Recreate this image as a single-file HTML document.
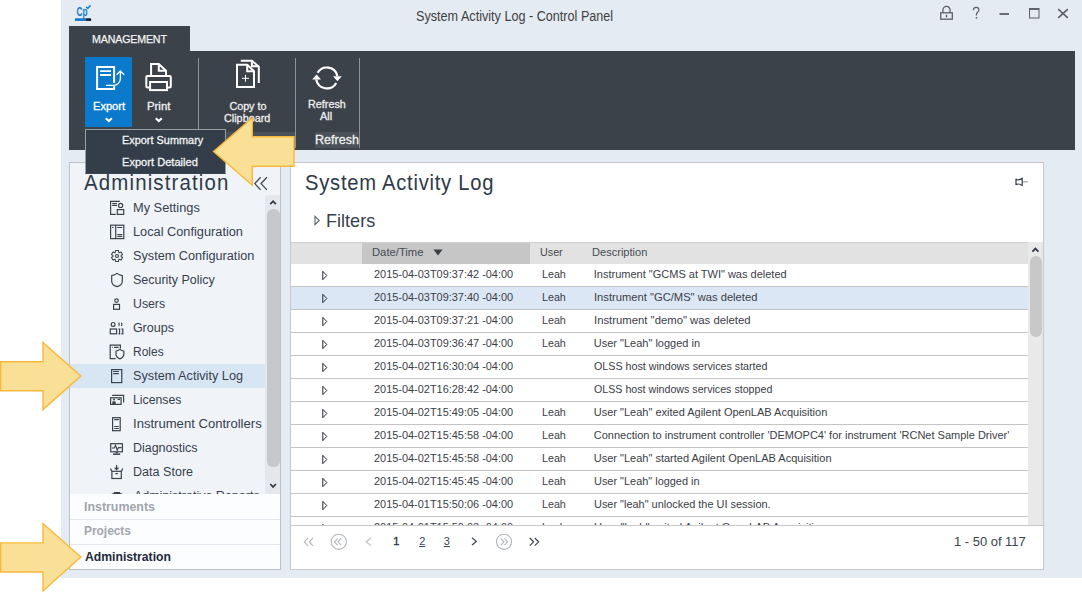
<!DOCTYPE html>
<html><head><meta charset="utf-8">
<style>
*{margin:0;padding:0;box-sizing:border-box}
html,body{width:1082px;height:592px;overflow:hidden;background:#fff;font-family:"Liberation Sans",sans-serif}
.a{position:absolute}
svg{position:absolute;left:0;top:0;overflow:visible}
.t{position:absolute;white-space:nowrap;line-height:1}
.r{font-size:11px;color:#3b4047}
.w{-webkit-text-stroke:0.25px currentColor}
.clip{position:absolute;overflow:hidden}
</style></head><body>
<div class="a" style="left:61px;top:0;width:1021px;height:578px;background:#e5ebf3"></div>

<!-- logo + title bar icons -->
<svg width="1082" height="60" viewBox="0 0 1082 60">
  <text x="76.6" y="16.2" font-family="Liberation Sans" font-weight="700" font-size="12" fill="#0f7bcc" textLength="11" lengthAdjust="spacingAndGlyphs">Cp</text>
  <path d="M86.2,6.8 L87.8,8.5 L90.6,5.2" fill="none" stroke="#0f7bcc" stroke-width="1.4"/>
  <rect x="75" y="18.3" width="10.5" height="2.6" fill="#0a78d0"/>
  <rect x="85.5" y="18.3" width="5.6" height="2.6" fill="#0d1a2a"/>
  <g fill="none" stroke="#5c5f63">
    <path d="M942.9,12.6 V10 A3.6,3.6 0 0 1 950.1,10 V12.6" stroke-width="1.3"/>
    <rect x="940.7" y="12.8" width="11.6" height="6.4" stroke-width="1.3"/>
    <path d="M946.5,14.8 V17.4" stroke-width="1.4"/>
    <path d="M973.4,10.3 C973.4,8.2 974.6,7.4 976.1,7.4 C977.8,7.4 978.9,8.4 978.9,10 C978.9,12.2 976.4,12.4 976.4,14.6 V15.4" stroke-width="1.2"/>
    <path d="M999.5,14 H1009" stroke-width="1.8"/>
    <rect x="1029.5" y="8.5" width="9.5" height="9.5" stroke-width="1"/>
    <path d="M1029.5,9.2 H1039" stroke-width="1.5"/>
    <path d="M1058.2,9.2 L1067.8,17.8 M1067.8,9.2 L1058.2,17.8" stroke-width="1.6"/>
  </g>
  <rect x="975.7" y="17" width="1.5" height="1.6" fill="#5c5f63"/>
</svg>

<!-- ribbon -->
<div class="a" style="left:69px;top:26px;width:121px;height:25px;background:#3c424a"></div>
<div class="a" style="left:69px;top:51px;width:1006px;height:99px;background:#3c424a"></div>
<div class="a" style="left:85px;top:57px;width:47px;height:70px;background:#0b7acc"></div>
<div class="a" style="left:198px;top:58px;width:1px;height:90px;background:#8d939a"></div>
<div class="a" style="left:295px;top:58px;width:1px;height:90px;background:#8d939a"></div>
<div class="a" style="left:359px;top:58px;width:1px;height:90px;background:#8d939a"></div>
<div class="a" style="left:225px;top:132px;width:70px;height:16px;background:#4b5159"></div>
<div class="a" style="left:315px;top:132px;width:43px;height:16px;background:#4b5159"></div>
<svg width="1082" height="160" viewBox="0 0 1082 160">
  <g fill="none" stroke="#fff" stroke-width="2">
    <!-- export -->
    <path d="M97.1,89 V67 H114.1 V83"/>
    <path d="M96.1,89 H115.1 M114.1,86.2 V90"/>
    <path d="M106,85.4 H113.6 A6.8,6.8 0 0 0 120.4,78.6 V71" stroke-width="1.3"/>
    <path d="M116.5,74.9 L120.4,71 L124.3,74.9" stroke-width="1.3"/>
    <path d="M100.1,71.1 H111 M100.1,75 H111" stroke-width="1.9"/>
    <!-- print -->
    <path d="M151.1,75 V64 H158.8 L166,70.8 V75"/>
    <path d="M158.8,64 V70.8 H166"/>
    <rect x="146.3" y="75.9" width="24.5" height="11.5" rx="1.2"/>
    <rect x="150.1" y="82" width="16.9" height="8.1" fill="#3c424a"/>
    <!-- copy -->
    <path d="M240.8,60.7 H251.9 L258.8,66.6 V83"/>
    <path d="M251.9,60.7 V66.2 H258.8"/>
    <path d="M237,87.1 V64.8 H247.2 L254,71.2 V87.1 Z" fill="#3c424a"/>
    <path d="M247.2,64.8 V71.2 H254"/>
    <path d="M242,78.3 H249 M245.5,74.8 V81.8" stroke-width="1"/>
    <!-- refresh -->
    <path d="M317.6,72.8 A10.8,10.8 0 0 1 337.4,76" stroke-width="2.2"/>
    <path d="M336.2,83 A10.8,10.8 0 0 1 316.2,79.4" stroke-width="2.2"/>
  </g>
  <g fill="#fff">
    <path d="M333,76.2 H341.8 L337.4,81.2 Z"/>
    <path d="M312.2,79.4 H321 L316.6,74.4 Z"/>
    <path d="M105.8,118.2 L108.8,121 L111.8,118.2" fill="none" stroke="#fff" stroke-width="2.1"/>
    <path d="M155.8,118.2 L158.8,121 L161.8,118.2" fill="none" stroke="#fff" stroke-width="2.1"/>
  </g>
</svg>

<!-- left panel -->
<div class="a" style="left:69px;top:162px;width:212px;height:408px;background:#f0f4f9;border:1px solid #bcc1c7"></div>
<div class="a" style="left:70px;top:364px;width:195px;height:24px;background:#d8e6f4"></div>
<div class="a" style="left:265px;top:195px;width:15px;height:299px;background:#e4e8ed"></div>
<div class="a" style="left:267px;top:209px;width:12.5px;height:257.5px;background:#c5c9cd;border-radius:6px"></div>
<div class="clip" style="left:70px;top:163px;width:195px;height:331px">
<div class="t" style="left:62.88px;top:39.22px;font-size:12.5px;color:#36404c;transform:scaleX(1.0234);transform-origin:0 0;">My Settings</div>
<div class="t" style="left:62.88px;top:63.22px;font-size:12.5px;color:#36404c;transform:scaleX(1.0208);transform-origin:0 0;">Local Configuration</div>
<div class="t" style="left:62.88px;top:87.22px;font-size:12.5px;color:#36404c;transform:scaleX(1.0153);transform-origin:0 0;">System Configuration</div>
<div class="t" style="left:62.90px;top:111.22px;font-size:12.5px;color:#36404c;">Security Policy</div>
<div class="t" style="left:62.92px;top:135.22px;font-size:12.5px;color:#36404c;transform:scaleX(0.9839);transform-origin:0 0;">Users</div>
<div class="t" style="left:62.90px;top:159.22px;font-size:12.5px;color:#36404c;">Groups</div>
<div class="t" style="left:62.94px;top:183.22px;font-size:12.5px;color:#36404c;transform:scaleX(0.9581);transform-origin:0 0;">Roles</div>
<div class="t" style="left:62.89px;top:207.22px;font-size:12.5px;color:#36404c;transform:scaleX(1.0150);transform-origin:0 0;">System Activity Log</div>
<div class="t" style="left:62.92px;top:231.22px;font-size:12.5px;color:#36404c;transform:scaleX(0.9792);transform-origin:0 0;">Licenses</div>
<div class="t" style="left:62.85px;top:255.22px;font-size:12.5px;color:#36404c;transform:scaleX(1.0467);transform-origin:0 0;">Instrument Controllers</div>
<div class="t" style="left:62.90px;top:279.22px;font-size:12.5px;color:#36404c;">Diagnostics</div>
<div class="t" style="left:62.89px;top:303.22px;font-size:12.5px;color:#36404c;transform:scaleX(1.0052);transform-origin:0 0;">Data Store</div>
<div class="t" style="left:63.90px;top:327.22px;font-size:12.5px;color:#36404c;">Administrative Reports</div>
</div>
<svg width="1082" height="592" viewBox="0 0 1082 592">
  <g fill="none" stroke="#3e4856" stroke-width="1.3">
    <path d="M260.6,177.3 L254.8,183.6 L260.6,189.9 M266.9,177.3 L261.1,183.6 L266.9,189.9"/>
  </g>
  <g fill="none" stroke="#333a44" stroke-width="1.8">
    <path d="M270.3,204.2 L273.1,201.2 L275.9,204.2"/>
    <path d="M270.3,484 L273.1,487 L275.9,484"/>
  </g>
  <!-- nav icons -->
  <g fill="none" stroke="#3a424c" stroke-width="1.2">
    <g transform="translate(109,200)">
      <path d="M10.8,1.3 H1.6 V14.4 H6.7"/>
      <path d="M3.2,3.6 H8 M3.2,5.5 H8"/>
      <circle cx="11.6" cy="5.4" r="2.1"/>
      <rect x="8.3" y="9.6" width="6.4" height="4.8"/>
    </g>
    <g transform="translate(109,224)">
      <rect x="1.6" y="1.2" width="13.2" height="13.4"/>
      <path d="M6.7,1.2 V14.6 M3.1,3.5 H4.6 M8.3,3.5 H13.3 M8.3,10.6 H13.3 M8.3,12.5 H13.3"/>
    </g>
    <g transform="translate(109,248)">
      <circle cx="8" cy="8" r="1.5"/>
      <path d="M6.33,4.25 L6.52,2.49 L9.48,2.49 L9.67,4.25 L10.41,4.68 L12.03,3.97 L13.51,6.52 L12.08,7.57 L12.08,8.43 L13.51,9.48 L12.03,12.03 L10.41,11.32 L9.67,11.75 L9.48,13.51 L6.52,13.51 L6.33,11.75 L5.59,11.32 L3.97,12.03 L2.49,9.48 L3.92,8.43 L3.92,7.57 L2.49,6.52 L3.97,3.97 L5.59,4.68 Z" stroke-width="1.1" stroke-linejoin="round"/>
    </g>
    <g transform="translate(109,272)">
      <path d="M8,1.4 C9.5,2.6 11.2,3.3 13.3,3.6 V9.2 C13.3,12 11.2,13.8 8,14.6 C4.8,13.8 2.7,12 2.7,9.2 V3.6 C4.8,3.3 6.5,2.6 8,1.4 Z"/>
    </g>
    <g transform="translate(109,296)">
      <circle cx="7.5" cy="4.6" r="1.8"/>
      <rect x="4.6" y="8.4" width="5.9" height="4.9"/>
    </g>
    <g transform="translate(109,320)">
      <circle cx="4.1" cy="4.4" r="1.9"/>
      <rect x="1.3" y="9" width="6.3" height="4.8"/>
      <path d="M9.7,2.6 Q11.1,4.3 9.7,6 M12.4,2.6 Q13.8,4.3 12.4,6 M9.4,9 H10.6 V13.8 H9.4 M12.3,9 H13.8 V13.8 H12.3"/>
    </g>
    <g transform="translate(109,344)">
      <path d="M11.4,4.6 V1.2 H1.2 V14.7 H6.6"/>
      <path d="M3,3.4 H3.6 M5,3.4 H9.6"/>
      <path d="M10.9,5.4 C12.1,6.4 13.4,6.9 14.8,7 V10.6 C14.8,12.6 13.2,14 10.9,14.9 C8.6,14 7,12.6 7,10.6 V7 C8.4,6.9 9.7,6.4 10.9,5.4 Z"/>
    </g>
    <g transform="translate(109,368)">
      <rect x="2.6" y="1.6" width="10.2" height="13"/>
      <path d="M4.2,3.5 H9.8 M4.2,5.6 H9.8" stroke-width="1.1"/>
    </g>
    <g transform="translate(109,392)">
      <path d="M3.2,3.3 H14.6 V10.6"/>
      <rect x="1.6" y="5.8" width="10.5" height="6.6"/>
      <circle cx="5" cy="7.6" r="1" fill="#3a424c" stroke="none"/>
      <rect x="3.3" y="9.4" width="3.4" height="3" fill="#3a424c" stroke="none"/>
      <path d="M8.6,7.4 H11"/>
    </g>
    <g transform="translate(109,416)">
      <rect x="3.6" y="1.7" width="7.6" height="13"/>
      <path d="M5.2,3.6 H9.8 M5.2,10.5 H9.8 M5.2,12.5 H9.8"/>
    </g>
    <g transform="translate(109,440)">
      <rect x="1.7" y="3.7" width="11.7" height="8.1"/>
      <path d="M3,8 H5.3 L6.5,5.3 L8.3,10.3 L9.5,7.6 H12.6" stroke-width="1.1"/>
      <path d="M4,14.2 H11.2" stroke-width="1.5"/>
      <path d="M6.6,12.6 H8.6" stroke-width="1.5"/>
    </g>
    <g transform="translate(109,464)">
      <path d="M7.6,1 V5.6 M5.6,3.7 L7.6,5.7 L9.6,3.7"/>
      <rect x="2.9" y="7.3" width="9.4" height="7.2"/>
      <path d="M1.5,4.6 L2.7,7.3 M13.7,4.6 L12.5,7.3 M6.4,9.6 H8.8"/>
    </g>
    <g transform="translate(109,488)">
      <path d="M2,8 C2,4.6 14,4.6 14,8"/>
      <rect x="5.5" y="4.6" width="5" height="3"/>
    </g>
  </g>
</svg>
<div class="a" style="left:70px;top:494px;width:210px;height:75px;background:#fcfdfe"></div>
<div class="a" style="left:70px;top:519px;width:210px;height:1px;background:#e3e8ee"></div>
<div class="a" style="left:70px;top:544px;width:210px;height:1px;background:#e3e8ee"></div>

<!-- right panel -->
<div class="a" style="left:290px;top:162px;width:754px;height:408px;background:#fff;border:1px solid #c6c8ca"></div>
<div class="a" style="left:291px;top:242px;width:737px;height:22px;background:#e2e2e2"></div>
<div class="a" style="left:362px;top:242px;width:168px;height:22px;background:#c6c6c6"></div>
<div class="a" style="left:291px;top:242px;width:737px;height:1px;background:#cfcfcf"></div>
<div class="a" style="left:1028px;top:242px;width:15px;height:283px;background:#e9e9e9"></div>
<div class="a" style="left:1030px;top:256px;width:12px;height:81px;background:#c8c8c8;border-radius:6px"></div>
<div class="a" style="left:291px;top:525px;width:752px;height:1px;background:#c8c8c8"></div>
<div class="clip" style="left:291px;top:264px;width:737px;height:261px">
  <div class="a" style="left:0;top:23px;width:737px;height:22px;background:#dce7f5"></div>
  <svg width="737" height="261" viewBox="0 0 737 261">
    <g fill="#c4c4c4">
      <rect x="0" y="22" width="737" height="1"/><rect x="0" y="45" width="737" height="1"/>
      <rect x="0" y="68" width="737" height="1"/><rect x="0" y="91" width="737" height="1"/>
      <rect x="0" y="114" width="737" height="1"/><rect x="0" y="137" width="737" height="1"/>
      <rect x="0" y="160" width="737" height="1"/><rect x="0" y="183" width="737" height="1"/>
      <rect x="0" y="206" width="737" height="1"/><rect x="0" y="229" width="737" height="1"/>
      <rect x="0" y="252" width="737" height="1"/>
    </g>
    <g fill="none" stroke="#262c34" stroke-width="1" stroke-linejoin="round" id="tri">
      <path d="M31.8,7.3 L35.8,11.5 L31.8,15.7 Z"/>
      <path d="M31.8,30.3 L35.8,34.5 L31.8,38.7 Z"/>
      <path d="M31.8,53.3 L35.8,57.5 L31.8,61.7 Z"/>
      <path d="M31.8,76.3 L35.8,80.5 L31.8,84.7 Z"/>
      <path d="M31.8,99.3 L35.8,103.5 L31.8,107.7 Z"/>
      <path d="M31.8,122.3 L35.8,126.5 L31.8,130.7 Z"/>
      <path d="M31.8,145.3 L35.8,149.5 L31.8,153.7 Z"/>
      <path d="M31.8,168.3 L35.8,172.5 L31.8,176.7 Z"/>
      <path d="M31.8,191.3 L35.8,195.5 L31.8,199.7 Z"/>
      <path d="M31.8,214.3 L35.8,218.5 L31.8,222.7 Z"/>
      <path d="M31.8,237.3 L35.8,241.5 L31.8,245.7 Z"/>
      <path d="M31.8,260.3 L35.8,264.5 L31.8,268.7 Z"/>
    </g>
  </svg>
<div class="t" style="left:82.91px;top:4.69px;font-size:11px;color:#3b4047;transform:scaleX(0.9935);transform-origin:0 0;">2015-04-03T09:37:42 -04:00</div>
<div class="t" style="left:251.13px;top:4.69px;font-size:11px;color:#3b4047;transform:scaleX(0.9739);transform-origin:0 0;">Leah</div>
<div class="t" style="left:302.80px;top:4.69px;font-size:11px;color:#3b4047;">Instrument &quot;GCMS at TWI&quot; was deleted</div>
<div class="t" style="left:82.91px;top:27.69px;font-size:11px;color:#3b4047;transform:scaleX(0.9935);transform-origin:0 0;">2015-04-03T09:37:40 -04:00</div>
<div class="t" style="left:251.13px;top:27.69px;font-size:11px;color:#3b4047;transform:scaleX(0.9739);transform-origin:0 0;">Leah</div>
<div class="t" style="left:302.78px;top:27.69px;font-size:11px;color:#3b4047;transform:scaleX(1.0170);transform-origin:0 0;">Instrument &quot;GC/MS&quot; was deleted</div>
<div class="t" style="left:82.91px;top:50.69px;font-size:11px;color:#3b4047;transform:scaleX(0.9935);transform-origin:0 0;">2015-04-03T09:37:21 -04:00</div>
<div class="t" style="left:251.13px;top:50.69px;font-size:11px;color:#3b4047;transform:scaleX(0.9739);transform-origin:0 0;">Leah</div>
<div class="t" style="left:302.77px;top:50.69px;font-size:11px;color:#3b4047;transform:scaleX(1.0291);transform-origin:0 0;">Instrument &quot;demo&quot; was deleted</div>
<div class="t" style="left:82.91px;top:73.69px;font-size:11px;color:#3b4047;transform:scaleX(0.9935);transform-origin:0 0;">2015-04-03T09:36:47 -04:00</div>
<div class="t" style="left:251.13px;top:73.69px;font-size:11px;color:#3b4047;transform:scaleX(0.9739);transform-origin:0 0;">Leah</div>
<div class="t" style="left:302.80px;top:73.69px;font-size:11px;color:#3b4047;">User &quot;Leah&quot; logged in</div>
<div class="t" style="left:82.91px;top:96.69px;font-size:11px;color:#3b4047;transform:scaleX(0.9935);transform-origin:0 0;">2015-04-02T16:30:04 -04:00</div>
<div class="t" style="left:302.83px;top:96.69px;font-size:11px;color:#3b4047;transform:scaleX(0.9718);transform-origin:0 0;">OLSS host windows services started</div>
<div class="t" style="left:82.91px;top:119.69px;font-size:11px;color:#3b4047;transform:scaleX(0.9935);transform-origin:0 0;">2015-04-02T16:28:42 -04:00</div>
<div class="t" style="left:302.83px;top:119.69px;font-size:11px;color:#3b4047;transform:scaleX(0.9689);transform-origin:0 0;">OLSS host windows services stopped</div>
<div class="t" style="left:82.91px;top:142.69px;font-size:11px;color:#3b4047;transform:scaleX(0.9935);transform-origin:0 0;">2015-04-02T15:49:05 -04:00</div>
<div class="t" style="left:251.13px;top:142.69px;font-size:11px;color:#3b4047;transform:scaleX(0.9739);transform-origin:0 0;">Leah</div>
<div class="t" style="left:302.80px;top:142.69px;font-size:11px;color:#3b4047;">User &quot;Leah&quot; exited Agilent OpenLAB Acquisition</div>
<div class="t" style="left:82.91px;top:165.69px;font-size:11px;color:#3b4047;transform:scaleX(0.9935);transform-origin:0 0;">2015-04-02T15:45:58 -04:00</div>
<div class="t" style="left:251.13px;top:165.69px;font-size:11px;color:#3b4047;transform:scaleX(0.9739);transform-origin:0 0;">Leah</div>
<div class="t" style="left:302.80px;top:165.69px;font-size:11px;color:#3b4047;">Connection to instrument controller &#x27;DEMOPC4&#x27; for instrument &#x27;RCNet Sample Driver&#x27;</div>
<div class="t" style="left:82.91px;top:188.69px;font-size:11px;color:#3b4047;transform:scaleX(0.9935);transform-origin:0 0;">2015-04-02T15:45:58 -04:00</div>
<div class="t" style="left:251.13px;top:188.69px;font-size:11px;color:#3b4047;transform:scaleX(0.9739);transform-origin:0 0;">Leah</div>
<div class="t" style="left:302.80px;top:188.69px;font-size:11px;color:#3b4047;">User &quot;Leah&quot; started Agilent OpenLAB Acquisition</div>
<div class="t" style="left:82.91px;top:211.69px;font-size:11px;color:#3b4047;transform:scaleX(0.9935);transform-origin:0 0;">2015-04-02T15:45:45 -04:00</div>
<div class="t" style="left:251.13px;top:211.69px;font-size:11px;color:#3b4047;transform:scaleX(0.9739);transform-origin:0 0;">Leah</div>
<div class="t" style="left:302.81px;top:211.69px;font-size:11px;color:#3b4047;transform:scaleX(0.9933);transform-origin:0 0;">User &quot;Leah&quot; logged in</div>
<div class="t" style="left:82.91px;top:234.69px;font-size:11px;color:#3b4047;transform:scaleX(0.9935);transform-origin:0 0;">2015-04-01T15:50:06 -04:00</div>
<div class="t" style="left:251.13px;top:234.69px;font-size:11px;color:#3b4047;transform:scaleX(0.9739);transform-origin:0 0;">Leah</div>
<div class="t" style="left:302.81px;top:234.69px;font-size:11px;color:#3b4047;transform:scaleX(0.9932);transform-origin:0 0;">User &quot;leah&quot; unlocked the UI session.</div>
<div class="t" style="left:82.91px;top:257.69px;font-size:11px;color:#3b4047;transform:scaleX(0.9935);transform-origin:0 0;">2015-04-01T15:50:03 -04:00</div>
<div class="t" style="left:251.13px;top:257.69px;font-size:11px;color:#3b4047;transform:scaleX(0.9739);transform-origin:0 0;">Leah</div>
<div class="t" style="left:302.79px;top:257.69px;font-size:11px;color:#3b4047;transform:scaleX(1.0110);transform-origin:0 0;">User &quot;leah&quot; exited Agilent OpenLAB Acquisition</div>
</div>
<svg width="1082" height="592" viewBox="0 0 1082 592">
  <!-- pin -->
  <g fill="none" stroke="#333a44" stroke-width="1.2">
    <path d="M1016,179.2 Q1019.2,180.8 1022.2,178.2 V185.6 Q1019.2,183 1016,184.6 Z" stroke-linejoin="round"/>
  </g>
  <path d="M1022.6,181.9 H1027.8" stroke="#8a8f95" stroke-width="1"/>
  <!-- filters triangle -->
  <path d="M315,216.4 L319.2,220.5 L315,224.6 Z" fill="none" stroke="#5a6068" stroke-width="1.1"/>
  <!-- sort triangle -->
  <path d="M433.4,249.6 H442.6 L438,255.4 Z" fill="#3a3f45"/>
  <!-- table scroll up -->
  <path d="M1032.4,251.6 L1035.4,248.6 L1038.4,251.6" fill="none" stroke="#333a44" stroke-width="1.8"/>
  <!-- pagination -->
  <g fill="none" stroke="#b3b7bc" stroke-width="1.1">
    <path d="M308,538 L304.3,541.9 L308,545.8 M313,538 L309.3,541.9 L313,545.8"/>
    <circle cx="338.8" cy="541.8" r="7.6"/>
    <path d="M337.6,538.4 L334.4,541.8 L337.6,545.2 M341.2,538.4 L338,541.8 L341.2,545.2"/>
    <path d="M371,537.9 L366.3,541.8 L371,545.7"/>
    <circle cx="504" cy="541.8" r="7.6"/>
    <path d="M500.8,538.4 L504,541.8 L500.8,545.2 M504.4,538.4 L507.6,541.8 L504.4,545.2"/>
  </g>
  <g fill="none" stroke="#3a4350" stroke-width="1.2">
    <path d="M472,537.8 L476.3,541.4 L472,545"/>
    <path d="M529.8,538 L533.6,541.8 L529.8,545.6 M534.8,538 L538.6,541.8 L534.8,545.6"/>
  </g>
</svg>

<!-- dropdown -->
<div class="a" style="left:85px;top:129px;width:141px;height:45px;background:#343e4b;border:1px solid #979ea6;border-bottom-color:#3a4350"></div>

<div class="t" style="left:415.61px;top:9.24px;font-size:14.24px;color:#3f3f3f;transform:scaleX(0.8869);transform-origin:0 0;">System Activity Log - Control Panel</div>
<div class="t" style="left:92.47px;top:34.08px;font-size:11.48px;color:#f4f4f4;transform:scaleX(0.9300);transform-origin:0 0;letter-spacing:-0.183px;-webkit-text-stroke:0.25px currentColor;">MANAGEMENT</div>
<div class="t" style="left:93.19px;top:101.81px;font-size:10.03px;color:#ffffff;transform:scaleX(1.1071);transform-origin:0 0;-webkit-text-stroke:0.3px currentColor;">Export</div>
<div class="t" style="left:147.17px;top:101.81px;font-size:10.03px;color:#f0f0f0;transform:scaleX(1.1350);transform-origin:0 0;-webkit-text-stroke:0.3px currentColor;">Print</div>
<div class="t" style="left:229.40px;top:100.89px;font-size:10.76px;color:#eeeeee;-webkit-text-stroke:0.3px currentColor;">Copy to</div>
<div class="t" style="left:223.50px;top:112.69px;font-size:10.76px;color:#eeeeee;transform:scaleX(1.0065);transform-origin:0 0;-webkit-text-stroke:0.3px currentColor;">Clipboard</div>
<div class="t" style="left:308.10px;top:98.79px;font-size:10.76px;color:#eeeeee;-webkit-text-stroke:0.3px currentColor;">Refresh</div>
<div class="t" style="left:319.50px;top:110.89px;font-size:10.76px;color:#eeeeee;transform:scaleX(1.0167);transform-origin:0 0;-webkit-text-stroke:0.3px currentColor;">All</div>
<div class="t" style="left:315.04px;top:133.13px;font-size:13.08px;color:#f0f0f0;transform:scaleX(0.9614);transform-origin:0 0;-webkit-text-stroke:0.3px currentColor;">Refresh</div>
<div class="t" style="left:122.27px;top:134.72px;font-size:10.61px;color:#f2f2f2;transform:scaleX(1.0282);transform-origin:0 0;-webkit-text-stroke:0.3px currentColor;">Export Summary</div>
<div class="t" style="left:122.25px;top:156.82px;font-size:10.61px;color:#f2f2f2;transform:scaleX(1.0451);transform-origin:0 0;-webkit-text-stroke:0.3px currentColor;">Export Detailed</div>
<div class="t" style="left:83.90px;top:172.79px;font-size:21.51px;color:#2f3a48;transform:scaleX(0.9500);transform-origin:0 0;letter-spacing:1.211px;">Administration</div>
<div class="t" style="left:84.16px;top:499.70px;font-size:13.23px;color:#a0a6ae;font-weight:700;transform:scaleX(0.9378);transform-origin:0 0;">Instruments</div>
<div class="t" style="left:84.20px;top:524.00px;font-size:13.23px;color:#a0a6ae;font-weight:700;transform:scaleX(0.9000);transform-origin:0 0;">Projects</div>
<div class="t" style="left:85.10px;top:549.80px;font-size:13.23px;color:#1f2a3c;font-weight:700;transform:scaleX(0.9215);transform-origin:0 0;">Administration</div>
<div class="t" style="left:304.75px;top:172.03px;font-size:21.22px;color:#2f3a48;transform:scaleX(0.9500);transform-origin:0 0;letter-spacing:0.801px;">System Activity Log</div>
<div class="t" style="left:326.41px;top:211.50px;font-size:18.31px;color:#36404c;transform:scaleX(0.9875);transform-origin:0 0;">Filters</div>
<div class="t" style="left:372.38px;top:246.69px;font-size:11px;color:#454b52;transform:scaleX(1.0224);transform-origin:0 0;">Date/Time</div>
<div class="t" style="left:540.02px;top:246.69px;font-size:11px;color:#454b52;transform:scaleX(0.9773);transform-origin:0 0;">User</div>
<div class="t" style="left:592.19px;top:246.69px;font-size:11px;color:#454b52;transform:scaleX(1.0056);transform-origin:0 0;">Description</div>
<div class="t" style="left:393.30px;top:536.29px;font-size:11px;color:#2a323c;-webkit-text-stroke:0.35px currentColor;">1</div>
<div class="t" style="left:419.20px;top:536.29px;font-size:11px;color:#3a4350;text-decoration:underline;">2</div>
<div class="t" style="left:443.80px;top:536.29px;font-size:11px;color:#3a4350;text-decoration:underline;">3</div>
<div class="t" style="left:953.91px;top:535.03px;font-size:13.08px;color:#3a4350;transform:scaleX(0.9901);transform-origin:0 0;">1 - 50 of 117</div>

<!-- callout arrows -->
<svg width="1082" height="592" viewBox="0 0 1082 592">
  <g fill="#fadf96" stroke="#f6b93a" stroke-width="1.4" stroke-linejoin="miter">
    <path d="M294,136.8 H252.3 V117.7 L213.6,151.5 L252.3,185.3 V166.2 H294 Z"/>
    <path d="M0.6,361.8 H43 V342.6 L80.8,376 L43,409.6 V390.8 H0.6 Z"/>
    <path d="M0.6,542.9 H43 V523.6 L80.8,557 L43,591 V572 H0.6 Z"/>
  </g>
</svg>
</body></html>
